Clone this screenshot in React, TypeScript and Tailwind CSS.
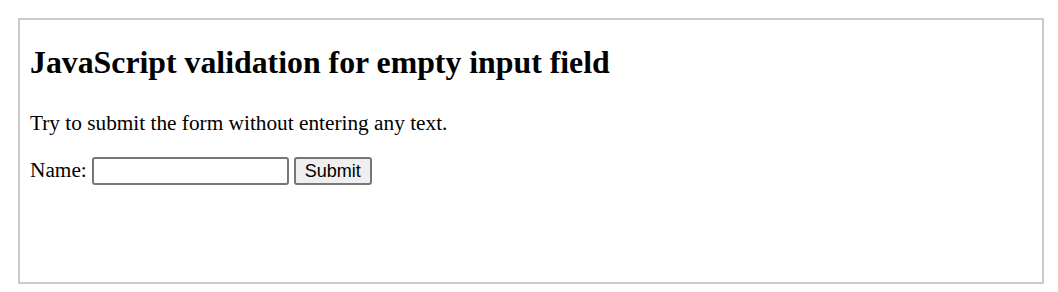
import React from 'react';

const serif = { fontFamily: '"Liberation Serif", "Times New Roman", serif' };

export default function App() {
  return (
    <div className="w-[1058px] h-[292px] bg-white pt-[18px] pl-[18px]">
      <div className="w-[1026px] h-[266px] border-2 border-[#cccccc] px-[10px]" style={serif}>
        <h1 className="text-[31.8px] font-bold leading-[37px] text-black mt-[24px]">
          JavaScript validation for empty input field
        </h1>
        <p className="text-[21.3px] leading-[24px] text-black mt-[30px]">
          Try to submit the form without entering any text.
        </p>
        <form className="flex items-center mt-[20px] text-[21.3px] text-black" onSubmit={(e) => e.preventDefault()}>
          <label htmlFor="name">Name:</label>
          <input
            id="name"
            type="text"
            className="ml-[5px] w-[197px] h-[28px] border-2 border-[#767676] rounded-[3px] bg-white px-1 outline-none"
          />
          <button
            type="submit"
            className="ml-[5px] w-[78px] h-[28px] border-2 border-[#767676] rounded-[3px] bg-[#efefef] text-[18px] text-black leading-none"
            style={{ fontFamily: '"Liberation Sans", Arial, sans-serif' }}
          >
            Submit
          </button>
        </form>
      </div>
    </div>
  );
}
